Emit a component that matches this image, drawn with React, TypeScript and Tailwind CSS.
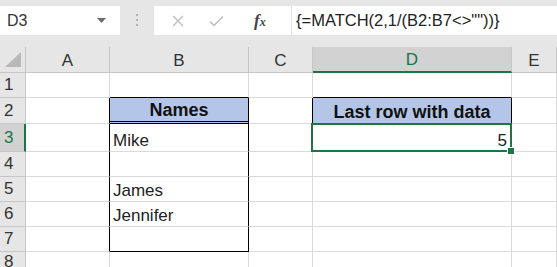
import React from 'react'

const font = { fontFamily: '"Liberation Sans", Arial, sans-serif' }

const colLetters = ['A', 'B', 'C', 'D', 'E']
const rowNums = [1, 2, 3, 4, 5, 6, 7, 8]

// per-cell extra classes, keyed "B2" etc.
const cellStyle: Record<string, string> = {
  A2: 'border-r-black', A3: 'border-r-black', A4: 'border-r-black', A5: 'border-r-black', A6: 'border-r-black', A7: 'border-r-black',
  B1: 'border-b-black',
  B2: 'border-r-black border-b-[3px] border-b-black border-double bg-[#b4c6e7]',
  B3: 'border-r-black', B4: 'border-r-black', B5: 'border-r-black', B6: 'border-r-black',
  B7: 'border-r-black border-b-black',
  C2: 'border-r-black',
  D1: 'border-b-black',
  D2: 'border-r-black border-b-black bg-[#b4c6e7]',
}

const content: Record<string, React.ReactNode> = {
  B2: <span className="w-full text-center font-bold text-[18px] text-[#111]">Names</span>,
  B3: <span className="pl-[3px] text-[17px] text-[#222]">Mike</span>,
  B5: <span className="pl-[3px] text-[17px] text-[#222]">James</span>,
  B6: <span className="pl-[3px] text-[17px] text-[#222]">Jennifer</span>,
  D2: <span className="w-full text-center font-bold text-[18px] text-[#111]">Last row with data</span>,
  D3: <span className="w-full text-right pr-[4px] text-[17px] text-[#222]">5</span>,
}

function Toolbar() {
  return (
    <div className="h-[47px] bg-[#e6e6e6] flex items-start pt-[6px]">
      <div className="w-[120px] h-[29px] bg-white flex items-center justify-between pl-[7px] pr-[14px]">
        <span className="text-[16px] text-[#333]">D3</span>
        <svg width="9" height="5" viewBox="0 0 9 5"><path d="M0 0h9L4.5 5z" fill="#6b6b6b" /></svg>
      </div>
      <div className="w-[34px] flex flex-col items-center gap-[3px] pt-[8px]">
        <span className="w-[2px] h-[2px] bg-[#b0b0b0]" />
        <span className="w-[2px] h-[2px] bg-[#b0b0b0]" />
        <span className="w-[2px] h-[2px] bg-[#b0b0b0]" />
      </div>
      <div className="flex-1 h-[29px] bg-white flex items-center">
        <div className="w-[138px] flex items-center h-full border-r border-[#e2e2e2]">
          <svg className="ml-[18px]" width="12" height="12" viewBox="0 0 12 12">
            <path d="M1 1l10 10M11 1L1 11" stroke="#bdbdbd" strokeWidth="1.4" />
          </svg>
          <svg className="ml-[25px]" width="15" height="12" viewBox="0 0 15 12">
            <path d="M1 6.5l4 4L14 1.5" stroke="#bdbdbd" strokeWidth="1.5" fill="none" />
          </svg>
          <span className="ml-[30px] text-[17px] italic font-bold text-[#444]" style={{ fontFamily: '"Liberation Serif", serif' }}>
            f<span className="text-[12px]">x</span>
          </span>
        </div>
        <span className="pl-[4px] text-[16.5px] text-[#222]">{'{=MATCH(2,1/(B2:B7<>""))}'}</span>
      </div>
    </div>
  )
}

export default function App() {
  return (
    <div className="w-[557px] h-[267px] overflow-hidden bg-white" style={font}>
      <Toolbar />
      <div className="grid grid-cols-[26px_84px_139px_64px_199px_1fr] grid-rows-[26px_25px_26px_28px_25px_25px_25px_25px_20px]">
        {/* header row */}
        <div className="relative bg-[#e6e6e6] border-r border-b border-[#c6c6c6]">
          <svg className="absolute right-[4px] bottom-[5px]" width="16" height="15" viewBox="0 0 16 15">
            <path d="M16 0v15H0z" fill="#b8b8b8" />
          </svg>
        </div>
        {colLetters.map((c) => (
          <div
            key={c}
            className={
              c === 'D'
                ? 'bg-[#d2d2d2] border-b-2 border-b-[#217346] border-r border-r-[#c6c6c6] flex items-center justify-center pt-[2px] text-[17px] text-[#217346]'
                : 'bg-[#e6e6e6] border-b border-r border-[#c6c6c6] flex items-center justify-center pt-[2px] text-[17px] text-[#333]'
            }
          >
            {c}
          </div>
        ))}
        {rowNums.map((r) => (
          <React.Fragment key={r}>
            <div
              className={
                r === 3
                  ? 'bg-[#d2d2d2] border-r-2 border-r-[#217346] border-b border-b-[#c6c6c6] flex items-center pl-[4px] text-[17px] text-[#217346]'
                  : 'bg-[#e6e6e6] border-r border-b border-[#c6c6c6] flex items-center pl-[4px] text-[17px] text-[#333]'
              }
            >
              {r}
            </div>
            {colLetters.map((c) => {
              const key = `${c}${r}`
              return (
                <div
                  key={key}
                  className={`relative flex items-end pb-[2px] leading-none border-r border-b border-[#dadada] ${cellStyle[key] ?? ''} ${key === 'D3' ? 'z-10' : ''}`}
                >
                  {content[key]}
                  {key === 'D3' && (
                    <div className="absolute -left-[2px] -top-[1px] -right-[1px] -bottom-[1px] border-2 border-[#217346]">
                      <span className="absolute -right-[5px] -bottom-[5px] w-[8px] h-[8px] bg-[#217346] border border-white" />
                    </div>
                  )}
                </div>
              )
            })}
          </React.Fragment>
        ))}
      </div>
    </div>
  )
}
